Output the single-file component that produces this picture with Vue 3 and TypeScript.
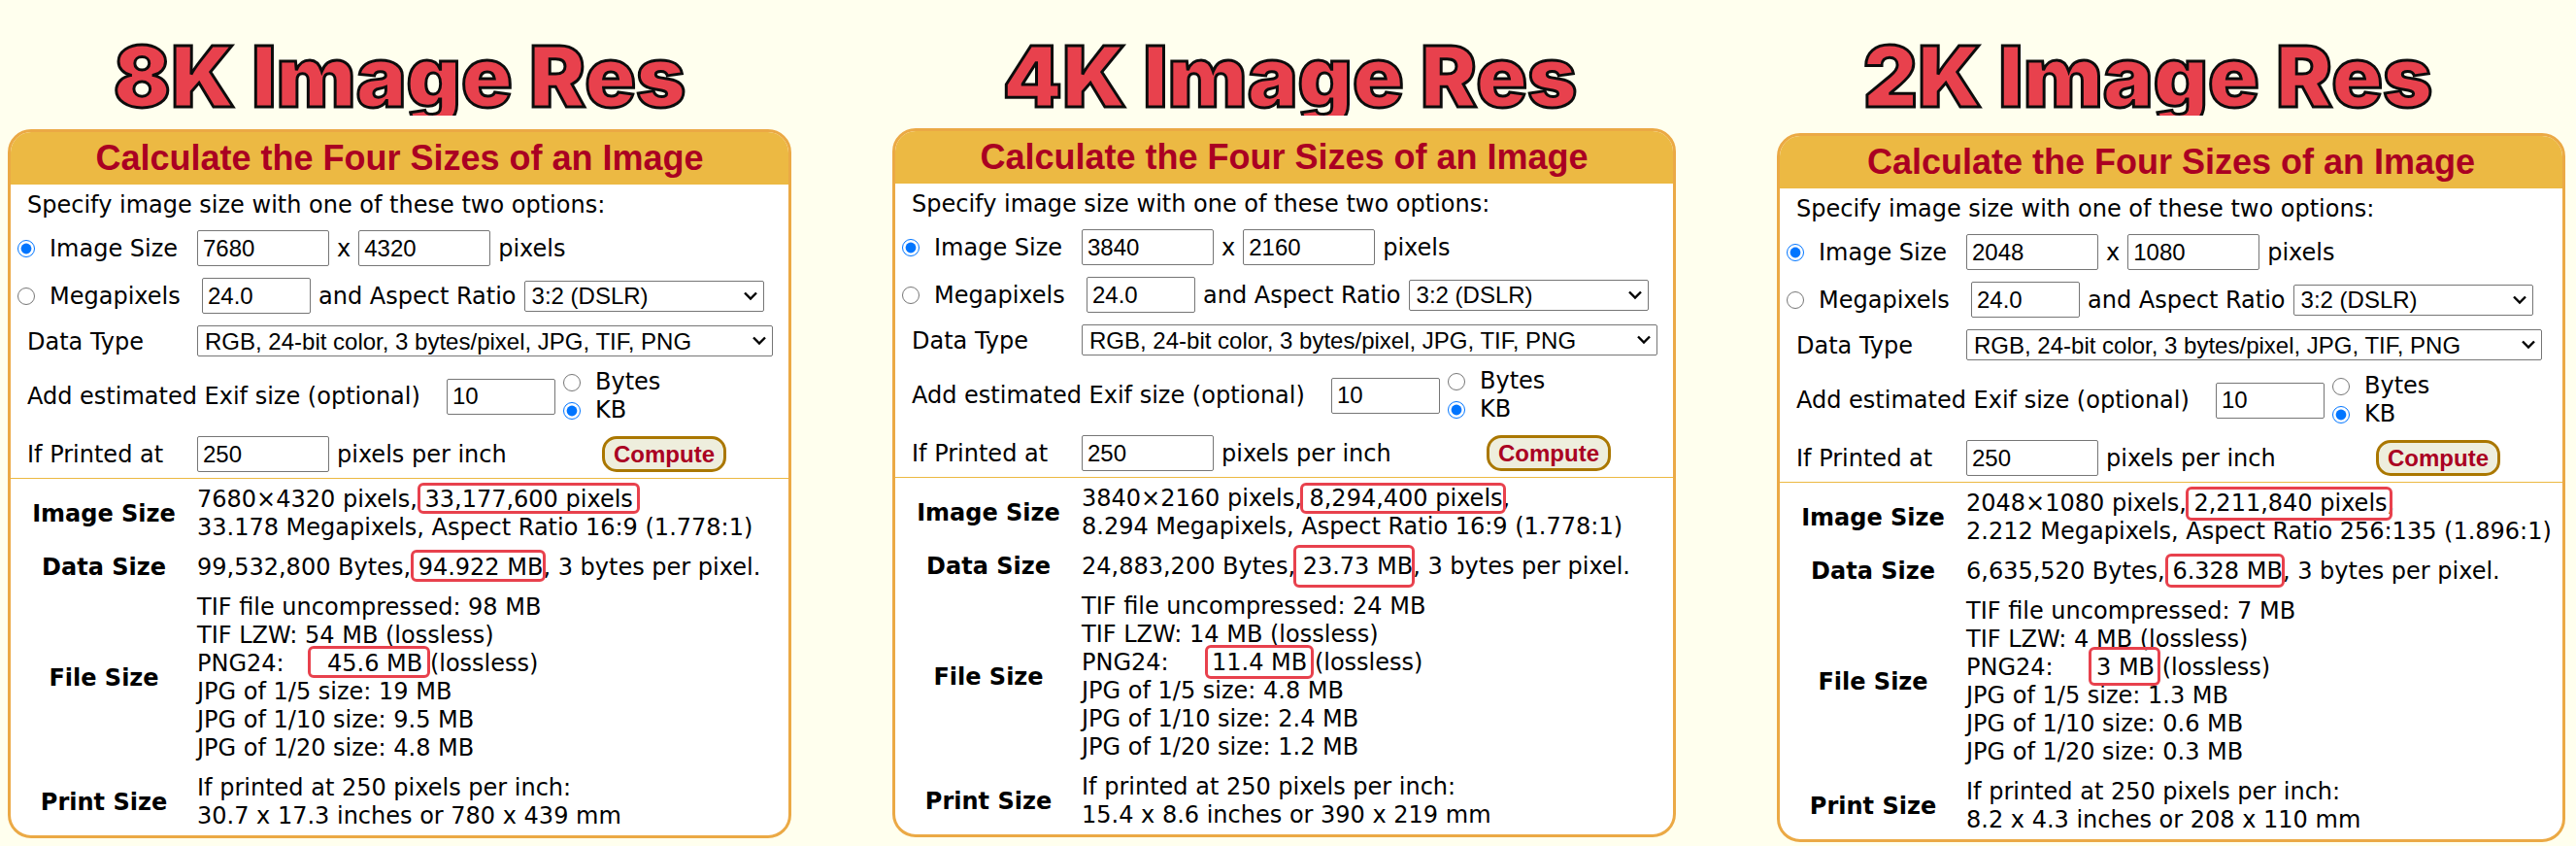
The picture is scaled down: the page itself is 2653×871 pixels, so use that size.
<script setup lang="ts">
import { reactive } from 'vue'

interface Mark {
  text: string
  // How far the frame reaches past the text: top, right, bottom, left
  reach: [number, number, number, number]
}

interface Panel {
  id: string
  title: string
  width: string
  height: string
  sizeMode: string
  exifUnit: string
  pixels: Mark
  afterPixels: string
  ratio: string
  bytes: string
  memory: Mark
  tif: string
  lzw: string
  png: Mark
  jpg5: string
  jpg10: string
  jpg20: string
  print: string
}

const panels = reactive<Panel[]>([
  {
    id: 'p8k', title: '8K Image Res', width: '7680', height: '4320', sizeMode: 'size', exifUnit: 'kb',
    pixels: { text: '33,177,600 pixels', reach: [3, 7, 0, 7] }, afterPixels: '',
    ratio: '33.178 Megapixels, Aspect Ratio 16:9 (1.778:1)',
    bytes: '99,532,800', memory: { text: '94.922 MB', reach: [4, 3, 0, 8] },
    tif: '98 MB', lzw: '54 MB', png: { text: '45.6 MB', reach: [4, 8, 0, 20] },
    jpg5: '19 MB', jpg10: '9.5 MB', jpg20: '4.8 MB',
    print: '30.7 x 17.3 inches or 780 x 439 mm',
  },
  {
    id: 'p4k', title: '4K Image Res', width: '3840', height: '2160', sizeMode: 'size', exifUnit: 'kb',
    pixels: { text: '8,294,400 pixels', reach: [2, 3, 1, 9] }, afterPixels: ',',
    ratio: '8.294 Megapixels, Aspect Ratio 16:9 (1.778:1)',
    bytes: '24,883,200', memory: { text: '23.73 MB', reach: [8, 2, 7, 10] },
    tif: '24 MB', lzw: '14 MB', png: { text: '11.4 MB', reach: [4, 7, 2, 7] },
    jpg5: '4.8 MB', jpg10: '2.4 MB', jpg20: '1.2 MB',
    print: '15.4 x 8.6 inches or 390 x 219 mm',
  },
  {
    id: 'p2k', title: '2K Image Res', width: '2048', height: '1080', sizeMode: 'size', exifUnit: 'kb',
    pixels: { text: '2,211,840 pixels', reach: [3, 5, 3, 8] }, afterPixels: ',',
    ratio: '2.212 Megapixels, Aspect Ratio 256:135 (1.896:1)',
    bytes: '6,635,520', memory: { text: '6.328 MB', reach: [4, 2, 2, 7] },
    tif: '7 MB', lzw: '4 MB', png: { text: '3 MB', reach: [7, 6, 4, 8] },
    jpg5: '1.3 MB', jpg10: '0.6 MB', jpg20: '0.3 MB',
    print: '8.2 x 4.3 inches or 208 x 110 mm',
  },
])

const frame = (m: Mark) => ({ '--reach': m.reach.map((v) => `${-v}px`).join(' ') })
</script>

<template>
  <main class="page">
    <section v-for="p in panels" :key="p.id" class="panel" :class="p.id">
      <h1 class="title">{{ p.title }}</h1>
      <div class="card">
        <h2 class="head">Calculate the Four Sizes of an Image</h2>
        <form class="form" @submit.prevent>
          <p class="row intro">Specify image size with one of these two options:</p>

          <div class="row">
            <div class="name choice">
              <input :id="p.id + '-size'" v-model="p.sizeMode" type="radio" :name="p.id + '-mode'" value="size" />
              <label :for="p.id + '-size'">Image Size</label>
            </div>
            <input v-model="p.width" class="field wide" type="text" aria-label="Width in pixels" />
            <span>x</span>
            <input v-model="p.height" class="field wide" type="text" aria-label="Height in pixels" />
            <span>pixels</span>
          </div>

          <div class="row">
            <div class="name choice">
              <input :id="p.id + '-mp'" v-model="p.sizeMode" type="radio" :name="p.id + '-mode'" value="mp" />
              <label :for="p.id + '-mp'">Megapixels</label>
            </div>
            <input class="field narrow inset" type="text" value="24.0" aria-label="Megapixels" />
            <label :for="p.id + '-ratio'">and Aspect Ratio</label>
            <select :id="p.id + '-ratio'" class="pick ratio">
              <option>3:2 (DSLR)</option>
            </select>
          </div>

          <div class="row">
            <label class="name" :for="p.id + '-type'">Data Type</label>
            <select :id="p.id + '-type'" class="pick type">
              <option>RGB, 24-bit color, 3 bytes/pixel, JPG, TIF, PNG</option>
            </select>
          </div>

          <div class="row">
            <label class="name long" :for="p.id + '-exif'">Add estimated Exif size (optional)</label>
            <input :id="p.id + '-exif'" class="field narrow" type="text" value="10" />
            <div class="units">
              <div class="choice">
                <input :id="p.id + '-b'" v-model="p.exifUnit" type="radio" :name="p.id + '-unit'" value="bytes" />
                <label :for="p.id + '-b'">Bytes</label>
              </div>
              <div class="choice">
                <input :id="p.id + '-kb'" v-model="p.exifUnit" type="radio" :name="p.id + '-unit'" value="kb" />
                <label :for="p.id + '-kb'">KB</label>
              </div>
            </div>
          </div>

          <div class="row">
            <label class="name" :for="p.id + '-ppi'">If Printed at</label>
            <input :id="p.id + '-ppi'" class="field wide" type="text" value="250" />
            <span>pixels per inch</span>
            <button class="compute" type="submit">Compute</button>
          </div>
        </form>

        <table class="results">
          <tbody>
            <tr>
              <th scope="row">Image Size</th>
              <td>
                {{ p.width }}×{{ p.height }} pixels, <span class="mark" :style="frame(p.pixels)">{{ p.pixels.text }}</span>{{ p.afterPixels }}<br />
                {{ p.ratio }}
              </td>
            </tr>
            <tr>
              <th scope="row">Data Size</th>
              <td>{{ p.bytes }} Bytes, <span class="mark" :style="frame(p.memory)">{{ p.memory.text }}</span>, 3 bytes per pixel.</td>
            </tr>
            <tr>
              <th scope="row">File Size</th>
              <td>
                TIF file uncompressed: {{ p.tif }}<br />
                TIF LZW: {{ p.lzw }} (lossless)<br />
                <span class="png">PNG24:</span><span class="mark" :style="frame(p.png)">{{ p.png.text }}</span> (lossless)<br />
                JPG of 1/5 size: {{ p.jpg5 }}<br />
                JPG of 1/10 size: {{ p.jpg10 }}<br />
                JPG of 1/20 size: {{ p.jpg20 }}
              </td>
            </tr>
            <tr>
              <th scope="row">Print Size</th>
              <td>If printed at 250 pixels per inch:<br />{{ p.print }}</td>
            </tr>
          </tbody>
        </table>
      </div>
    </section>
  </main>
</template>

<style>
body {
  margin: 0;
  background: #ffffee;
}
</style>

<style scoped>
.page {
  display: grid;
  grid-template-columns: 807fr 807fr 812fr;
  gap: 104px;
  align-items: start;
  padding: 0 11px 4px 8px;
  color: #000;
  font: 24px/29px "DejaVu Sans", Verdana, sans-serif;
  white-space: nowrap;
}

.title {
  box-sizing: border-box;
  height: 119px;
  margin: 0 0 14px;
  padding-top: 29px;
  overflow: hidden;
  color: #e8414d;
  font: 900 87px/100px Inter, sans-serif;
  text-align: center;
  -webkit-text-stroke: 3px #0c0c0c;
}
.p4k .title {
  margin-bottom: 13px;
  padding-left: 12px;
}
.p2k .title {
  margin-bottom: 18px;
  padding-right: 48px;
}

.card {
  overflow: hidden;
  border: 3px solid #eba945;
  border-radius: 24px;
  background: #fff;
}

.head {
  margin: 0;
  padding: 6px 0;
  background: #ecb943;
  color: #aa0022;
  font: bold 36px/42px "Liberation Sans", Arial, sans-serif;
  text-align: center;
}

.form {
  border-bottom: 1px solid #ecb943;
}
.row {
  display: flex;
  align-items: center;
  gap: 8px;
  padding: 6px 0;
}
.row.intro {
  margin: 0;
  padding: 7px 0 5px 17px;
}
.row > span,
.row > label,
.name label {
  padding-top: 2px;
}
.name {
  box-sizing: border-box;
  width: 192px;
  margin-right: -8px;
  padding-left: 17px;
}
.name.choice {
  padding-left: 7px;
}
.row > .name.long {
  width: 449px;
  padding-top: 0;
}
.choice {
  display: flex;
  align-items: center;
  gap: 15px;
}
.choice input {
  width: 18px;
  height: 18px;
  margin: 0;
}

.field,
.pick {
  box-sizing: border-box;
  border: 1px solid #767676;
  border-radius: 2px;
  background: #fff;
  color: #000;
  font: 24px "Liberation Sans", Arial, sans-serif;
}
.field {
  height: 37px;
  padding: 0 5px;
}
.wide {
  width: 136px;
}
.narrow {
  width: 112px;
}
.inset {
  margin-left: 5px;
}
.pick {
  height: 32px;
  padding: 0 28px 0 7px;
  appearance: none;
  background: #fff url("data:image/svg+xml,%3Csvg xmlns='http://www.w3.org/2000/svg' width='14' height='10' viewBox='0 0 14 10'%3E%3Cpath d='M1 1.5l6 6 6-6' fill='none' stroke='%23000' stroke-width='2.4'/%3E%3C/svg%3E") no-repeat right 6px center;
}
.ratio {
  width: 247px;
}
.type {
  width: 593px;
}

.compute {
  box-sizing: border-box;
  width: 128px;
  height: 37px;
  margin: 0 64px 0 auto;
  padding: 0;
  border: 3px solid #aa7700;
  border-radius: 15px;
  background: #eeeedd;
  color: #aa0022;
  font: bold 24px "Liberation Sans", Arial, sans-serif;
}

.results {
  width: 100%;
  border-collapse: collapse;
}
th,
td {
  padding: 7px 0 5px;
  text-align: left;
  vertical-align: middle;
}
th {
  box-sizing: border-box;
  width: 192px;
  text-align: center;
}
.png {
  display: inline-block;
  width: 134px;
}
.mark {
  display: inline-block;
  position: relative;
}
.mark::after {
  content: "";
  position: absolute;
  inset: var(--reach);
  border: 3px solid #e8414d;
  border-radius: 6px;
}
</style>
